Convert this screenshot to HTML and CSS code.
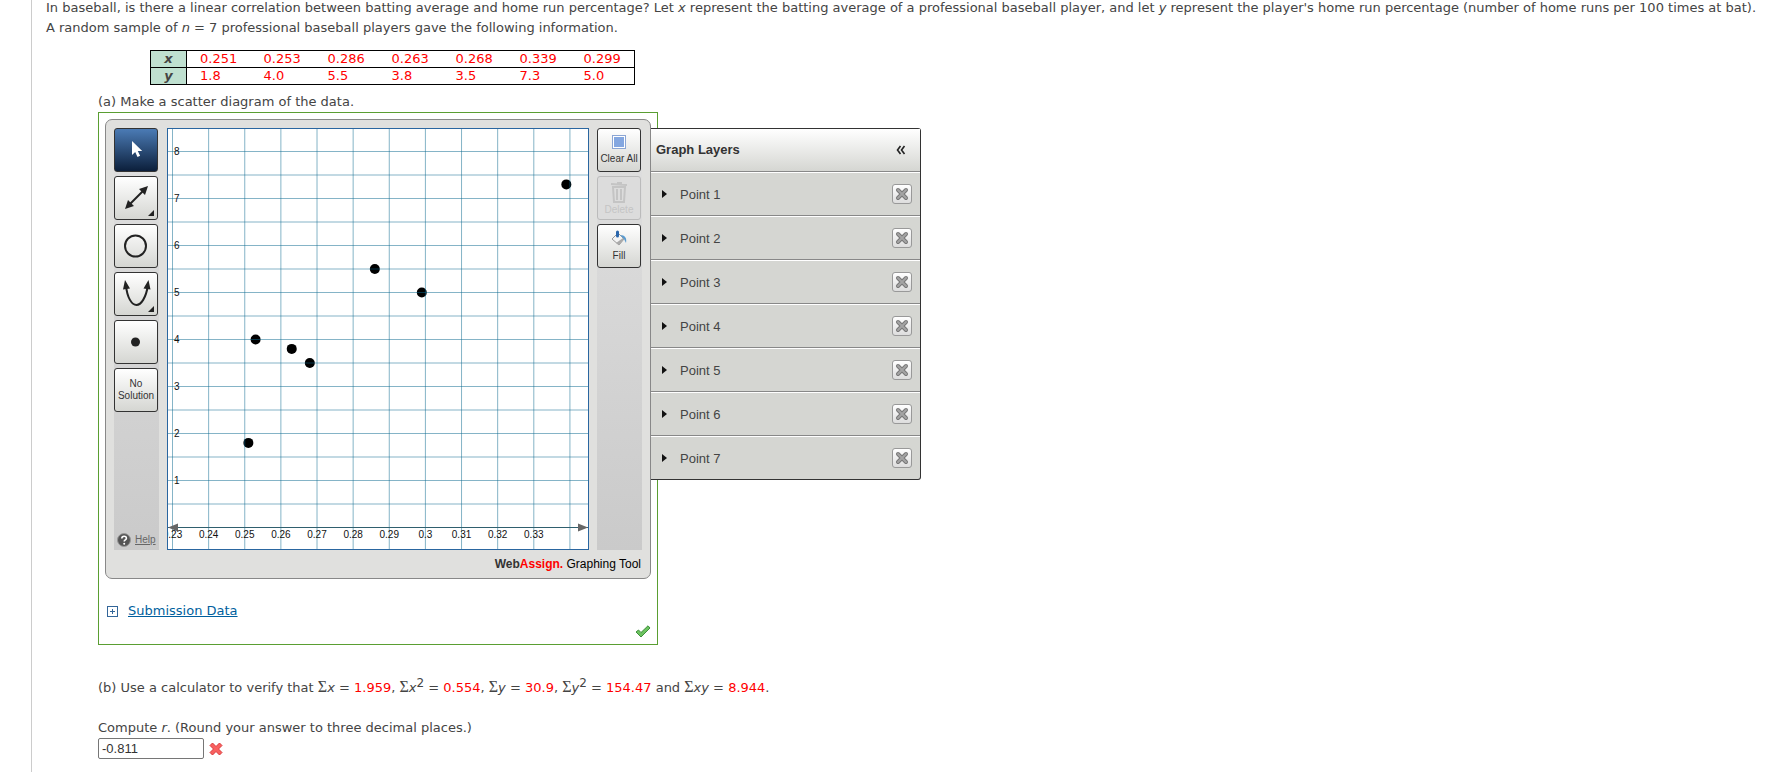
FILE: index.html
```html
<!DOCTYPE html>
<html lang="en">
<head>
    <meta charset="UTF-8">
    <meta name="viewport" content="width=device-width, initial-scale=1.0">
    <title>Linear Correlation</title>
    <link rel="stylesheet" href="styles.css">
</head>
<body>

    <main class="question">
        <p class="intro">
            In baseball, is there a linear correlation between batting average and home run percentage? Let <i>x</i> represent the batting average of a professional baseball player, and let <i>y</i> represent the player's home run percentage (number of home runs per 100 times at bat). A random sample of <i>n</i> = 7 professional baseball players gave the following information.
        </p>

        <table class="data">
            <tr>
                <th scope="row">x</th>
                <td>0.251</td><td>0.253</td><td>0.286</td><td>0.263</td><td>0.268</td><td>0.339</td><td>0.299</td>
            </tr>
            <tr>
                <th scope="row">y</th>
                <td>1.8</td><td>4.0</td><td>5.5</td><td>3.8</td><td>3.5</td><td>7.3</td><td>5.0</td>
            </tr>
        </table>

        <section class="part">
            <p>(a) Make a scatter diagram of the data.</p>

            <div class="answer-box">
                <div class="grapher">
                    <div class="tool-panel">
                        <div class="workspace">
                            <div class="toolbar">
                                <button class="tool selected" aria-label="Select">
                                    <svg width="42" height="42" viewBox="0 0 42 42"><path d="M17 12v14l3.200-3 2.300 5 2.600-1.200-2.300-4.800h4.400z" fill="#fff"/></svg>
                                </button>
                                <button class="tool" aria-label="Line">
                                    <svg width="42" height="42" viewBox="0 0 42 42" fill="#222">
                                        <path d="M14 28L29 13" stroke="#222" stroke-width="2"/>
                                        <path d="M33 9l-3 9-6-6zM10 32l3-9 6 6z"/>
                                        <path d="M39 33v6h-6z"/>
                                    </svg>
                                </button>
                                <button class="tool" aria-label="Circle">
                                    <svg width="42" height="42" viewBox="0 0 42 42"><circle cx="20.500" cy="21" r="10.500" fill="none" stroke="#222" stroke-width="2"/></svg>
                                </button>
                                <button class="tool" aria-label="Parabola">
                                    <svg width="42" height="42" viewBox="0 0 42 42" fill="#222">
                                        <path d="M11 12C12 25 17 32 21.500 32S31 25 33 12" fill="none" stroke="#222" stroke-width="2"/>
                                        <path d="M10 7l5 8.500-7 1zM33.500 7l2 9.500-7-1z"/>
                                        <path d="M39 33v6h-6z"/>
                                    </svg>
                                </button>
                                <button class="tool" aria-label="Point">
                                    <svg width="42" height="42" viewBox="0 0 42 42"><circle cx="20.500" cy="21" r="4.500" fill="#222"/></svg>
                                </button>
                                <button class="tool">No<br>Solution</button>
                                <div class="help">
                                    <svg width="14" height="14" viewBox="0 0 14 14">
                                        <circle cx="7" cy="7" r="6.500" fill="#555" stroke="#999"/>
                                        <path d="M4.800 5.500c0-3 4.600-3 4.600-.3C9.400 7 7.200 6.800 7.200 8.600" fill="none" stroke="#fff" stroke-width="1.600"/>
                                        <circle cx="7.200" cy="10.800" r="1" fill="#fff"/>
                                    </svg>
                                    <a href="#">Help</a>
                                </div>
                            </div>

                            <svg class="graph" id="graph" viewBox="0 0 420 420" role="img" aria-label="Scatter diagram"></svg>

                            <div class="toolbar">
                                <button class="tool">
                                    <svg width="14" height="14" viewBox="0 0 14 14">
                                        <rect x=".5" y=".5" width="13" height="13" fill="#fff" stroke="#8ca6d4"/>
                                        <rect x="2" y="2" width="10" height="10" fill="#84a7e0"/>
                                    </svg>
                                    Clear All
                                </button>
                                <button class="tool" disabled>
                                    <svg width="18" height="22" viewBox="0 0 18 22" fill="none" stroke="#c4c4c4" stroke-width="2">
                                        <path d="M1 3l16 1M7 2h5" />
                                        <path d="M3 6h12l-1 15H4zM7 8v11M11 8v11"/>
                                    </svg>
                                    Delete
                                </button>
                                <button class="tool">
                                    <svg width="16" height="16" viewBox="0 0 16 16">
                                        <path d="M1 9l6-6 6 6-5 6z" fill="#f4f4f4" stroke="#999"/>
                                        <path d="M5 13l7-5 1 1-5 6z" fill="#aaa"/>
                                        <path d="M9 5c5 0 7 3 6 8l-2-4z" fill="#5a9bd0"/>
                                        <path d="M6.500 2v4" stroke="#2a66ac" stroke-width="3" stroke-linecap="round"/>
                                    </svg>
                                    Fill
                                </button>
                            </div>
                        </div>
                        <div class="brand"><b>Web<span class="brand-red">Assign.</span></b> Graphing Tool</div>
                    </div>

                    <div class="layers">
                        <div class="layers-header">
                            <h2>Graph Layers</h2>
                            <button class="collapse" aria-label="Collapse">
                                <svg width="10" height="10" viewBox="0 0 10 10" fill="none" stroke="#222" stroke-width="1.600"><path d="M4.500 1L1.500 5l3 4M8.500 1l-3 4 3 4"/></svg>
                            </button>
                        </div>
                        <div id="layer-list"></div>
                    </div>
                </div>

                <div class="submission">
                    <svg width="11" height="11" viewBox="0 0 11 11" fill="none" stroke="#336699">
                        <rect x=".5" y=".5" width="10" height="10"/>
                        <path d="M3 5.500h5M5.500 3v5"/>
                    </svg>
                    <a href="#">Submission Data</a>
                </div>
                <div class="correct">
                    <svg width="16" height="13" viewBox="0 0 16 13"><path d="M1 7l2.500-2L6 7.500 13 .8 15 3 6 12z" fill="#6cc35f" stroke="#3f8f3c"/></svg>
                </div>
            </div>
        </section>

        <section class="part sums">
            <p>
                (b) Use a calculator to verify that <span class="sigma">Σ</span><i>x</i> = <span class="num">1.959</span>, <span class="sigma">Σ</span><i>x</i><sup>2</sup> = <span class="num">0.554</span>, <span class="sigma">Σ</span><i>y</i> = <span class="num">30.9</span>, <span class="sigma">Σ</span><i>y</i><sup>2</sup> = <span class="num">154.47</span> and <span class="sigma">Σ</span><i>xy</i> = <span class="num">8.944</span>.
            </p>
        </section>

        <section class="part compute">
            <label for="answer-r">Compute <i>r</i>. (Round your answer to three decimal places.)</label>
            <div class="answer">
                <input type="text" id="answer-r" value="-0.811">
                <svg width="14" height="14" viewBox="0 0 14 14"><path d="M3.500 1L7 4.500 10.500 1 13 3.500 9.500 7l3.500 3.500-2.500 2.500L7 9.500 3.500 13 1 10.500 4.500 7 1 3.500z" fill="#f9605f" stroke="#d9383a"/></svg>
            </div>
        </section>
    </main>

    <script>
        const points = [
            [0.251, 1.8], [0.253, 4.0], [0.286, 5.5], [0.263, 3.8],
            [0.268, 3.5], [0.339, 7.3], [0.299, 5.0]
        ];

        // Convert data values to graph coordinates
        const toX = x => 4.5 + (x - 0.23) * 3613;
        const toY = y => 398.5 - y * 47;

        function drawGraph() {
            let dots = '', grid = '', labels = '';

            points.forEach(([x, y]) => {
                dots += `<circle cx="${toX(x)}" cy="${toY(y)}" r="5"/>`;
            });

            // Vertical lines every 0.01
            for (let i = 0; i <= 11; i++) {
                const value = 0.23 + i / 100;
                const x = toX(value);
                grid += `<path d="M${x} 0V420"/>`;
                if (i < 11) {
                    labels += `<text x="${x}" y="409" text-anchor="middle">${Number(value.toFixed(2))}</text>`;
                }
            }

            // Horizontal lines every half unit
            for (let i = 1; i <= 16; i++) {
                const y = toY(i / 2);
                grid += `<path d="M0 ${y}H420"/>`;
                if (i % 2 === 0) {
                    labels += `<text x="6" y="${y + 3}">${i / 2}</text>`;
                }
            }

            document.getElementById('graph').innerHTML = `
                <g>${dots}</g>
                <g class="grid">${grid}</g>
                <path class="axis" d="M0 398.5H420"/>
                <path class="arrow" d="M0 398.5l10-4v8zM420 398.5l-10-4v8z"/>
                <g class="labels">${labels}</g>`;
        }

        // One row per plotted point
        function listLayers() {
            document.getElementById('layer-list').innerHTML = points.map((p, i) => `
                <div class="layer">
                    <button class="layer-name">
                        <svg width="5" height="8" viewBox="0 0 5 8"><path d="M0 0l5 4-5 4z" fill="#111"/></svg>
                        Point ${i + 1}
                    </button>
                    <button class="remove" aria-label="Remove Point ${i + 1}">
                        <svg width="14" height="14" viewBox="0 0 14 14" stroke-linecap="round"><path d="M3 3l8 8M11 3l-8 8" stroke="#777" stroke-width="4"/><path d="M3 3l8 8M11 3l-8 8" stroke="#a4a4a4" stroke-width="2"/></svg>
                    </button>
                </div>`).join('');
        }

        drawGraph();
        listLayers();
    </script>

</body>
</html>
```
FILE: styles.css
```css
* {
    box-sizing: border-box;
}

body {
    margin: 0;
    background-color: white;
    color: #444;
    font-family: Verdana, "DejaVu Sans", sans-serif;
    font-size: 13px;
    line-height: 20px;
}

p {
    margin: 0;
}

svg {
    display: block;
    flex: none;
}

button {
    padding: 0;
    font-family: Arial, "Liberation Sans", sans-serif;
    color: #333;
    cursor: pointer;
}

a {
    color: #005f9e;
}

.question {
    margin-top: -2px;
    margin-left: 31px;
    padding: 0 8px 14px 14px;
    border-left: 1px solid #ccc;
}

/* Data table */
.data {
    margin: 12px 0 7px 104px;
    border-collapse: collapse;
    border: 1px solid black;
    line-height: 16px;
}

.data tr + tr {
    border-top: 1px solid black;
}

.data th {
    width: 36px;
    padding: 0;
    background-color: #bfe0d0;
    border-right: 1px solid black;
    font-style: italic;
}

.data td {
    width: 64px;
    padding: 0 0 0 13px;
    color: red;
}

.part {
    margin-left: 52px;
}

.answer-box {
    width: 560px;
    padding: 6px;
    border: 1px solid #5a9e32;
}

/* Graphing tool */
.grapher {
    display: flex;
    align-items: flex-start;
    font-family: Arial, "Liberation Sans", sans-serif;
}

.tool-panel {
    flex: none;
    width: 546px;
    padding: 8px;
    padding-bottom: 4px;
    background-color: #e0e0de;
    border: 1px solid #888;
    border-radius: 7px;
}

.workspace {
    display: grid;
    grid-template-columns: 45px 422px 45px;
    gap: 8px;
}

.toolbar {
    display: flex;
    flex-direction: column;
    gap: 4px;
    background: linear-gradient(#e0e0e0, #cacaca);
}

.tool {
    display: flex;
    flex-direction: column;
    align-items: center;
    justify-content: center;
    gap: 4px;
    width: 44px;
    height: 44px;
    background: linear-gradient(white, #d5d6d2);
    border: 1px solid #333;
    border-radius: 3px;
    font-size: 10px;
    line-height: 12px;
    white-space: nowrap;
}

.tool.selected {
    background: linear-gradient(#4b7bb5, #0c1f3b);
}

.tool:disabled {
    gap: 1px;
    background: #dcdcdc;
    border-color: #bbb;
    color: #c4c4c4;
    cursor: default;
}

.help {
    display: flex;
    align-items: center;
    gap: 4px;
    margin-top: auto;
    padding-left: 3px;
    font-size: 10px;
}

.help a {
    color: #666;
}

.graph {
    width: 422px;
    height: 422px;
    background-color: white;
    border: 1px solid #2a66a0;
}

.grid {
    stroke: #0b6a8f;
    stroke-opacity: 0.5;
}

.axis {
    stroke: #2f5f6e;
}

.arrow {
    fill: #666;
}

.labels {
    fill: #111;
    font-size: 10px;
}

.brand {
    padding-top: 4px;
    padding-right: 1px;
    color: black;
    font-size: 12px;
    text-align: right;
}

.brand b {
    color: #333;
}

.brand .brand-red {
    color: red;
}

/* Layer list */
.layers {
    position: relative;
    flex: none;
    width: 270px;
    margin-top: 9px;
    background-color: #d5d6d2;
    border: 1px solid #333;
    border-left: none;
    border-radius: 0 3px 3px 0;
}

.layers-header {
    display: flex;
    align-items: center;
    justify-content: space-between;
    height: 43px;
    padding: 0 14px 0 5px;
    background: linear-gradient(white, #d5d6d2);
    border-bottom: 1px solid #888;
}

.layers-header h2 {
    margin: 0;
    color: #333;
    font-size: 13px;
}

.collapse {
    background: none;
    border: none;
}

.layer {
    display: flex;
    align-items: center;
    justify-content: space-between;
    height: 44px;
    padding-right: 8px;
    border-top: 1px solid white;
    border-bottom: 1px solid #888;
}

.layer:last-child {
    height: 43px;
    border-bottom: none;
}

.layer-name {
    display: flex;
    align-items: center;
    gap: 13px;
    padding-left: 11px;
    background: none;
    border: none;
    color: #444;
    font-size: 13px;
}

.remove {
    display: flex;
    align-items: center;
    justify-content: center;
    width: 20px;
    height: 20px;
    background: linear-gradient(white, #ddd);
    border: 1px solid #999;
    border-radius: 3px;
}

.submission {
    display: flex;
    align-items: center;
    gap: 10px;
    margin-top: 22px;
    padding-left: 2px;
}

.correct {
    display: flex;
    justify-content: flex-end;
    margin-top: 4px;
}

/* Part b */
.sums {
    margin-top: 32px;
}

.num {
    color: red;
}

.sigma {
    font-family: "Liberation Serif", serif;
    font-size: 16px;
}

sup {
    font-size: 12px;
    line-height: 0;
}

.compute {
    margin-top: 20px;
}

.answer {
    display: flex;
    align-items: center;
    gap: 5px;
}

.answer input {
    width: 106px;
    height: 21px;
    padding: 1px 3px;
    border: 1px solid #767676;
    border-radius: 2px;
    color: #333;
    font-family: Arial, "Liberation Sans", sans-serif;
    font-size: 13px;
}
```
